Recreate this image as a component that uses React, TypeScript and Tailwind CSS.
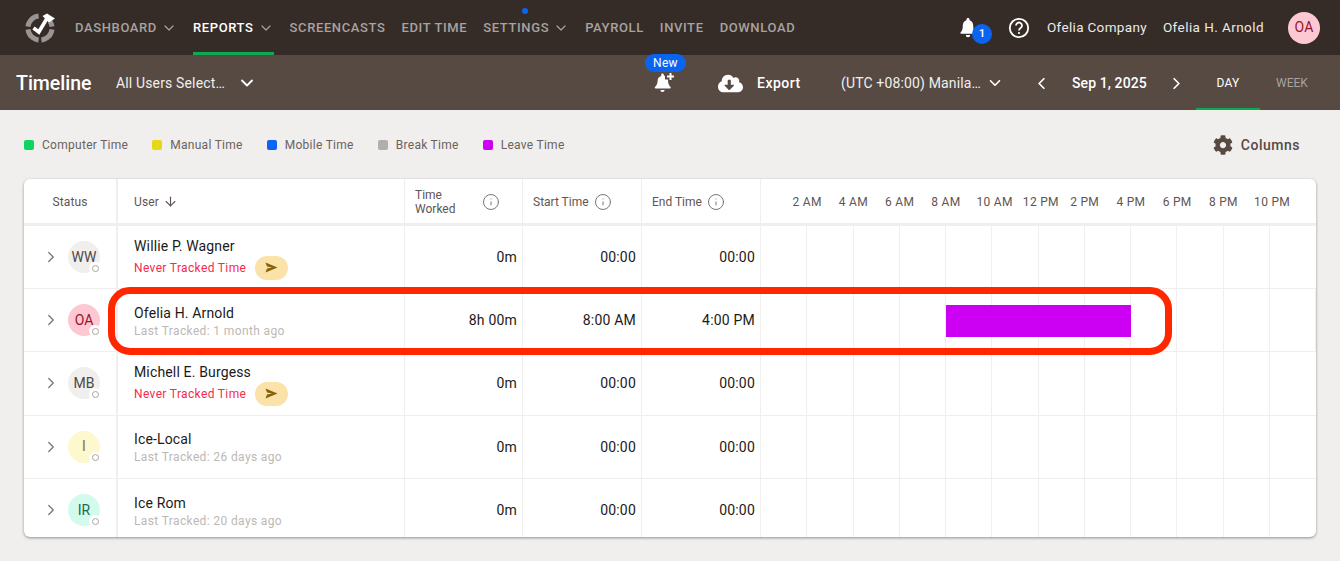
import React from "react";
import { FaCloudDownloadAlt, FaCog } from "react-icons/fa";
import { ChevronDown, ChevronLeft, ChevronRight, ArrowDown, Info } from "lucide-react";

function Logo() {
  return (
    <svg width="30" height="30" viewBox="0 0 30 30" fill="none">
      <g stroke="#9a9492" strokeWidth="5" fill="none">
        <path d="M3 13.6 A12 12 0 0 1 13.6 3" />
        <path d="M3 16.4 A12 12 0 0 0 13.6 27" />
        <path d="M16.4 27 A12 12 0 0 0 27 16.4" />
        <path d="M27 13.6 A12 12 0 0 0 25 8.4" />
      </g>
      <path d="M8.5 15 L13.8 19 L22.5 4.5" stroke="#fff" strokeWidth="3.6" fill="none" />
      <path d="M17.5 3 L22 0.5 L30 5.5 L24 9.5 Z" fill="#fff" />
    </svg>
  );
}

function NavItem({ label, caret, active, hasDot }: { label: string; caret?: boolean; active?: boolean; hasDot?: boolean }) {
  return (
    <div className={`relative flex h-[55px] items-center ${active ? "border-b-[3px] border-[#0eaa4f] pt-[3px]" : ""}`}>
      <span className={`text-[13px] font-medium tracking-[0.62px] ${active ? "text-white" : "text-[#a8a2a0]"}`}>{label}</span>
      {caret && <ChevronDown size={16} strokeWidth={1.8} className="ml-[4px] text-[#a8a2a0]" />}
      {hasDot && <span className="absolute left-[39px] top-[8px] h-[6px] w-[6px] rounded-full bg-[#0a64f0]" />}
    </div>
  );
}

function Send() {
  return (
    <span className="ml-[9px] flex h-[24px] w-[33px] items-center justify-center rounded-[12px] bg-[#fbe2a8]">
      <svg width="13" height="11" viewBox="0 0 13 11"><path d="M0.5 0.5 L12.5 5.5 L0.5 10.5 L2 6.5 L7 5.5 L2 4.5 Z" fill="#85620f" /></svg>
    </span>
  );
}

type Row = {
  initials: string;
  name: string;
  sub: string;
  never?: boolean;
  avatar: string;
  avatarText: string;
  worked: string;
  start: string;
  end: string;
  bar?: boolean;
};

const rows: Row[] = [
  { initials: "WW", name: "Willie P. Wagner", sub: "Never Tracked Time", never: true, avatar: "bg-[#f0efee]", avatarText: "text-[#4f4744]", worked: "0m", start: "00:00", end: "00:00" },
  { initials: "OA", name: "Ofelia H. Arnold", sub: "Last Tracked: 1 month ago", avatar: "bg-[#fdc8d2]", avatarText: "text-[#96142f]", worked: "8h 00m", start: "8:00 AM", end: "4:00 PM", bar: true },
  { initials: "MB", name: "Michell E. Burgess", sub: "Never Tracked Time", never: true, avatar: "bg-[#f0efee]", avatarText: "text-[#4f4744]", worked: "0m", start: "00:00", end: "00:00" },
  { initials: "I", name: "Ice-Local", sub: "Last Tracked: 26 days ago", avatar: "bg-[#fdf8ce]", avatarText: "text-[#8c7418]", worked: "0m", start: "00:00", end: "00:00" },
  { initials: "IR", name: "Ice Rom", sub: "Last Tracked: 20 days ago", avatar: "bg-[#d2fbee]", avatarText: "text-[#1c6b4d]", worked: "0m", start: "00:00", end: "00:00" },
];

const hours = ["2 AM", "4 AM", "6 AM", "8 AM", "10 AM", "12 PM", "2 PM", "4 PM", "6 PM", "8 PM", "10 PM"];
const legend = [
  ["Computer Time", "bg-[#0fd45f]"],
  ["Manual Time", "bg-[#e8d619]"],
  ["Mobile Time", "bg-[#0a64f5]"],
  ["Break Time", "bg-[#b3aeab]"],
  ["Leave Time", "bg-[#cc00f2]"],
];
const cols = "grid grid-cols-[94px_287px_118px_119px_119px_1fr]";

function HeadInfo({ label, wide }: { label: React.ReactNode; wide?: boolean }) {
  return (
    <div className={`flex items-center border-r border-[#f0efee] pl-[10px] pt-[1px] text-[12px] leading-[14px] text-[#5f5552] ${wide ? "justify-between pr-[22px]" : "gap-[5px]"}`}>
      <span>{label}</span>
      <Info size={18} strokeWidth={1.3} className="text-[#7a716d]" />
    </div>
  );
}

export default function App() {
  return (
    <div className="relative h-[561px] w-[1340px] overflow-hidden bg-[#f0efee] font-['Roboto',sans-serif]">
      <header className="flex h-[55px] items-center bg-[#352c28]">
        <div className="ml-[25px] flex w-[50px]"><Logo /></div>
        <div className="flex items-center">
          <div className="mr-[8px]"><NavItem label="DASHBOARD" caret /></div>
          <div className="mr-[8px] px-[8px]"><NavItem label="REPORTS" caret active /></div>
          <div className="mr-[16px]"><NavItem label="SCREENCASTS" /></div>
          <div className="mr-[16px]"><NavItem label="EDIT TIME" /></div>
          <div className="mr-[16px]"><NavItem label="SETTINGS" caret hasDot /></div>
          <div className="mr-[16px]"><NavItem label="PAYROLL" /></div>
          <div className="mr-[16px]"><NavItem label="INVITE" /></div>
          <NavItem label="DOWNLOAD" />
        </div>
        <div className="ml-auto flex items-center">
          <div className="relative mr-[32px] h-[22px] w-[16px]">
            <svg width="16" height="22" viewBox="0 0 16 22" fill="#fff">
              <path d="M8 1 c.9 0 1.5.6 1.5 1.4 v.8 c2.4.6 3.7 2.8 3.7 5.3 0 3.6.7 5.4 2.3 7 .4.5.1 1.2-.6 1.2 H1.1 c-.7 0-1-.7-.6-1.2 1.6-1.6 2.3-3.4 2.3-7 0-2.5 1.3-4.7 3.7-5.3 v-.8 C6.5 1.6 7.1 1 8 1 Z M5.8 18 h4.4 a2.2 2.2 0 0 1-4.4 0 Z" />
            </svg>
            <span className="absolute left-[12px] top-[7px] flex h-[20px] w-[20px] items-center justify-center rounded-full bg-[#0a64f0] text-[11.5px] font-medium text-white">1</span>
          </div>
          <svg width="22" height="22" viewBox="0 0 22 22" fill="none" className="mr-[17px]">
            <circle cx="11" cy="11" r="9.2" stroke="#fff" strokeWidth="1.8" />
            <path d="M8 8.6 a3 3 0 1 1 4.6 2.5 c-1 .7 -1.6 1.2 -1.6 2.5" stroke="#fff" strokeWidth="1.8" />
            <circle cx="11" cy="16" r="1.1" fill="#fff" />
          </svg>
          <span className="mr-[16px] text-[13.5px] tracking-[0.33px] text-[#ece9e7]">Ofelia Company</span>
          <span className="mr-[24px] text-[13.5px] tracking-[0.43px] text-[#ece9e7]">Ofelia H. Arnold</span>
          <span className="mr-[20px] flex h-[32px] w-[32px] items-center justify-center rounded-full bg-[#fdc8d2] text-[14px] tracking-[0.3px] text-[#96142f]">OA</span>
        </div>
      </header>

      <div className="flex h-[55px] items-center bg-[#574a43] pt-[1px] text-white">
        <span className="ml-[16px] w-[76px] whitespace-nowrap pt-[1px] text-[19.5px] font-medium">Timeline</span>
        <span className="ml-[24px] w-[109px] whitespace-nowrap text-[14px] tracking-[0.15px] text-[#f0efee]">All Users Select…</span>
        <ChevronDown size={20} strokeWidth={2.2} className="ml-[12px]" />
        <div className="relative ml-[396px] flex h-[22px] w-[22px] justify-center">
          <svg width="22" height="22" viewBox="0 0 22 22" fill="#fff">
            <path d="M9.5 1.5 c.8 0 1.3.6 1.3 1.3 v.7 c.5.1 .9.3 1.2.5 v3.5 h3 v1.5 c.1 3 1.4 5 2.5 6 .5.5 .2 1.5-.6 1.5 H2.6 c-.8 0-1.1-1-.6-1.5 1.2-1 2.6-3 2.6-6 0-2.4 1.4-4.4 3.6-4.9 V2.8 C8.2 2.1 8.7 1.5 9.5 1.5 Z M7.4 18 h4.2 a2.1 2.1 0 0 1-4.2 0 Z" />
            <path d="M17.5 1 v7 M14 4.5 h7" stroke="#fff" strokeWidth="2" fill="none" />
          </svg>
          <span className="absolute left-[-8px] top-[-18px] flex h-[18px] w-[41px] items-center justify-center rounded-full bg-[#0a64f0] text-[12px] tracking-[0.3px]">New</span>
        </div>
        <FaCloudDownloadAlt size={25} className="ml-[43px]" />
        <span className="ml-[14px] w-[44px] whitespace-nowrap text-[14px] font-medium tracking-[0.5px]">Export</span>
        <span className="ml-[40px] w-[140px] whitespace-nowrap text-[14px] tracking-[0.15px] text-[#f0efee]">(UTC +08:00) Manila…</span>
        <ChevronDown size={18} strokeWidth={2.2} className="ml-[5px]" />
        <ChevronLeft size={19} strokeWidth={2.2} className="ml-[28px]" />
        <span className="ml-[21px] w-[76px] whitespace-nowrap text-[14px] font-medium tracking-[0.1px]">Sep 1, 2025</span>
        <ChevronRight size={19} strokeWidth={2.2} className="ml-[19px]" />
        <div className="ml-[10px] flex h-[54px] w-[64px] items-center justify-center border-b-[2px] border-[#0eaa4f] pt-[1px] text-[12px] tracking-[0.3px]">DAY</div>
        <span className="ml-[16px] text-[12px] text-[#a8a2a0]">WEEK</span>
      </div>

      <div className="flex h-[69px] items-center pl-[24px] pr-[40px] pt-[1px]">
        {legend.map(([label, color]) => (
          <div key={label} className="mr-[24px] flex items-center">
            <span className={`mr-[8px] h-[10px] w-[10px] rounded-[2px] ${color}`} />
            <span className="text-[12px] tracking-[0.28px] text-[#6b625e]">{label}</span>
          </div>
        ))}
        <div className="ml-auto flex items-center">
          <FaCog size={20} className="mr-[8px] text-[#574a43]" />
          <span className="text-[14px] font-medium tracking-[0.5px] text-[#574a43]">Columns</span>
        </div>
      </div>

      <div className="mx-[24px] h-[358px] overflow-hidden rounded-[6px] bg-white shadow-[0_1px_3px_rgba(0,0,0,0.4)]">
        <div className={`${cols} h-[47px] border-b-[3px] border-[#f0efee]`}>
          <div className="flex items-center justify-center border-r-[2px] border-[#f0efee] pt-[1px] text-[12px] tracking-[0.1px] text-[#5f5552]">Status</div>
          <div className="flex items-center border-r border-[#f0efee] pl-[16px] pt-[1px] text-[12px] tracking-[0.1px] text-[#5f5552]">
            User <ArrowDown size={15} strokeWidth={1.8} className="ml-[4px]" />
          </div>
          <HeadInfo wide label={<>Time<br />Worked</>} />
          <HeadInfo label="Start Time" />
          <HeadInfo label="End Time" />
          <div className="grid grid-cols-[23px_repeat(11,46.25px)] items-center pt-[1px]">
            <span />
            {hours.map((h) => (
              <span key={h} className={`whitespace-nowrap text-center text-[12px] tracking-[0.3px] text-[#5f5552] ${h.length === 5 ? "pl-[5px]" : ""}`}>{h}</span>
            ))}
          </div>
        </div>
        {rows.map((r, i) => (
          <div key={r.name} className={`${cols} h-[63.2px] ${i < rows.length - 1 ? "border-b-[1.5px] border-[#f0efee]" : ""}`}>
            <div className="flex items-center border-r-[2px] border-[#f0efee] pl-[18px]">
              <ChevronRight size={18} strokeWidth={1.6} className="text-[#7a716d]" />
              <div className={`relative ml-[8px] flex h-[32px] w-[32px] items-center justify-center rounded-full text-[14px] ${r.avatar} ${r.avatarText}`}>
                {r.initials}
                <span className="absolute bottom-[-1px] right-[-1px] flex h-[12px] w-[12px] items-center justify-center rounded-full bg-white">
                  <span className="h-[7px] w-[7px] rounded-full border-[1.5px] border-[#a8a3a0]" />
                </span>
              </div>
            </div>
            <div className="flex flex-col justify-center border-r border-[#f0efee] pl-[16px] pt-[2px]">
              <div className="text-[14px] leading-[18px] tracking-[0.15px] text-[#1c1a19]">{r.name}</div>
              {r.never ? (
                <div className="mt-[1px] flex items-center text-[12px] tracking-[0.35px] text-[#f8284f]">{r.sub}<Send /></div>
              ) : (
                <div className="mt-[1px] text-[12px] leading-[16px] tracking-[0.37px] text-[#bdb8b5]">{r.sub}</div>
              )}
            </div>
            <div className="flex items-center justify-end border-r border-[#f0efee] pr-[5px] pt-[1px] text-[14px] tracking-[0.2px] text-[#1c1a19]">{r.worked}</div>
            <div className="flex items-center justify-end border-r border-[#f0efee] pr-[5px] pt-[1px] text-[14px] tracking-[0.2px] text-[#1c1a19]">{r.start}</div>
            <div className="flex items-center justify-end border-r border-[#f0efee] pr-[5px] pt-[1px] text-[14px] tracking-[0.2px] text-[#1c1a19]">{r.end}</div>
            <div className="relative grid grid-cols-[repeat(12,46.25px)]">
              {Array.from({ length: 12 }).map((_, k) => (
                <span key={k} className="border-r border-[#f0efee] last:border-r-0" />
              ))}
              {r.bar && <span className="absolute left-[185px] top-[15.5px] h-[32px] w-[185px] bg-[#cc00f2]" />}
            </div>
          </div>
        ))}
      </div>

      <div className="pointer-events-none absolute left-[108px] top-[287px] h-[68px] w-[1064px] rounded-[22px] border-[7.5px] border-[#ff2600]" />
    </div>
  );
}
